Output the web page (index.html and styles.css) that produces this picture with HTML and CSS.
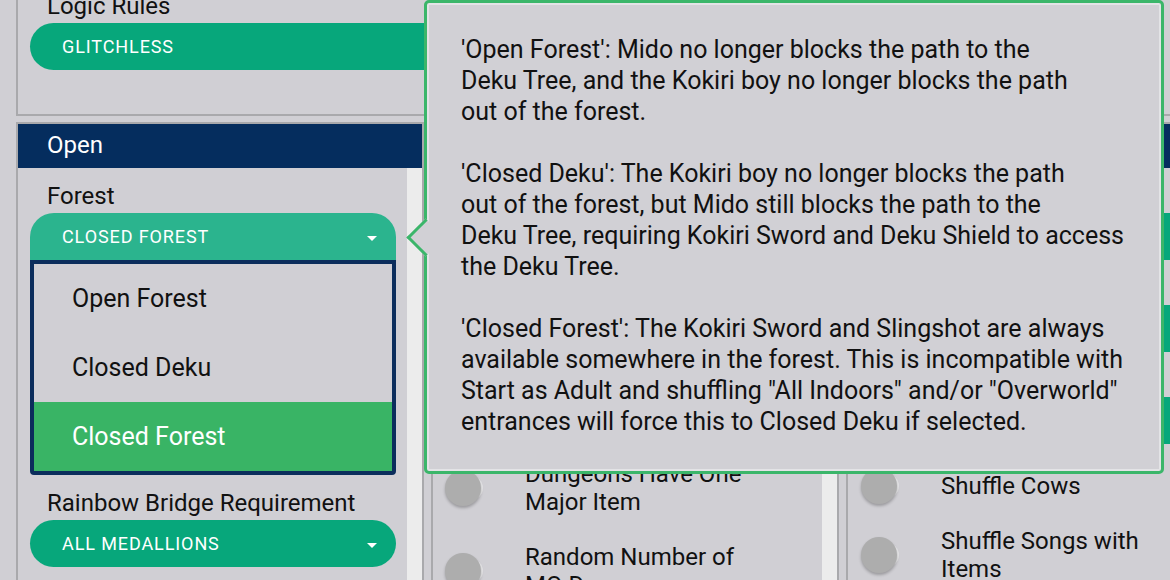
FILE: index.html
```html
<!DOCTYPE html>
<html lang="en">
<head>
<meta charset="utf-8">
<title>Settings</title>
<link rel="stylesheet" href="styles.css">
</head>
<body>
<div class="page">
  <div class="top-panel">
    <div class="field first wide">
      <div class="label">Logic Rules</div>
      <div class="select"><span>Glitchless</span><i class="caret"></i></div>
    </div>
  </div>

  <div class="columns">
    <section class="section">
      <h2 class="section-head">Open</h2>
      <div class="section-body">
        <div class="section-content">
          <div class="field first">
            <div class="label">Forest</div>
            <div class="select open"><span>Closed Forest</span><i class="caret"></i></div>
            <ul class="options">
              <li>Open Forest</li>
              <li>Closed Deku</li>
              <li class="selected">Closed Forest</li>
            </ul>
          </div>
          <div class="field">
            <div class="label">Rainbow Bridge Requirement</div>
            <div class="select"><span>All Medallions</span><i class="caret"></i></div>
          </div>
        </div>
        <div class="scrollbar"></div>
      </div>
    </section>

    <section class="section">
      <h2 class="section-head">World</h2>
      <div class="section-body">
        <div class="section-content toggles mid">
          <div class="toggle-row"><span class="switch"></span><span class="toggle-text">Randomize Main Rule<br>Settings</span></div>
          <div class="toggle-row"><span class="switch"></span><span class="toggle-text">Shuffle Dungeon<br>Entrances</span></div>
          <div class="toggle-row"><span class="switch"></span><span class="toggle-text">Start as Adult</span></div>
          <div class="toggle-row"><span class="switch"></span><span class="toggle-text">Bombchus in Logic</span></div>
          <div class="toggle-row"><span class="switch"></span><span class="toggle-text">Dungeons Have One<br>Major Item</span></div>
          <div class="toggle-row"><span class="switch"></span><span class="toggle-text">Random Number of<br>MQ Dungeons</span></div>
        </div>
        <div class="scrollbar"></div>
      </div>
    </section>

    <section class="section">
      <h2 class="section-head">Shuffle</h2>
      <div class="section-body">
        <div class="section-content">
          <div class="field first">
            <div class="label">Shopsanity</div>
            <div class="select"><span>Off</span><i class="caret"></i></div>
          </div>
          <div class="field">
            <div class="label">Tokensanity</div>
            <div class="select"><span>Off</span><i class="caret"></i></div>
          </div>
          <div class="field">
            <div class="label">Scrub Shuffle</div>
            <div class="select"><span>Off</span><i class="caret"></i></div>
          </div>
          <div class="toggles right">
            <div class="toggle-row"><span class="switch"></span><span class="toggle-text">Shuffle Cows</span></div>
            <div class="toggle-row"><span class="switch"></span><span class="toggle-text">Shuffle Songs with<br>Items</span></div>
          </div>
        </div>
        <div class="scrollbar"></div>
      </div>
    </section>
  </div>

  <div class="tooltip">
    <p>'Open Forest': Mido no longer blocks the path to the<br>Deku Tree, and the Kokiri boy no longer blocks the path<br>out of the forest.</p>
    <p>'Closed Deku': The Kokiri boy no longer blocks the path<br>out of the forest, but Mido still blocks the path to the<br>Deku Tree, requiring Kokiri Sword and Deku Shield to access<br>the Deku Tree.</p>
    <p>'Closed Forest': The Kokiri Sword and Slingshot are always<br>available somewhere in the forest. This is incompatible with<br>Start as Adult and shuffling "All Indoors" and/or "Overworld"<br>entrances will force this to Closed Deku if selected.</p>
  </div>
</div>
</body>
</html>
```

FILE: styles.css
```css
* { box-sizing: border-box; }

html, body {
  margin: 0;
  padding: 0;
  overflow: hidden;
}

body {
  background: #d0cfd4;
  color: #111;
  font-family: Roboto, "Liberation Sans", sans-serif;
}

.page {
  position: relative;
  width: 1170px;
  height: 580px;
  overflow: hidden;
}

.top-panel {
  width: 1238px;
  margin-left: 16px;
  margin-top: -21px;
  border: 2px solid #a9a9ac;
  border-top: none;
  padding: 14px 11px 44px 12px;
}

.field { margin-top: 15px; }
.field.first { margin-top: 0; }
.field.wide { width: 560px; }

.label {
  font-size: 24px;
  line-height: 26px;
  padding-left: 17px;
  margin-bottom: 4px;
  color: #111;
  white-space: nowrap;
}

.select {
  height: 47px;
  border-radius: 24px;
  background: #07a77b;
  color: #fff;
  display: flex;
  align-items: center;
  justify-content: space-between;
  padding: 0 19px 0 32px;
  font-size: 18px;
  letter-spacing: 0.9px;
  text-transform: uppercase;
}

.select.open {
  background: #2bb48e;
  border-radius: 24px 24px 0 0;
}

.caret {
  width: 0;
  height: 0;
  border-left: 5px solid transparent;
  border-right: 5px solid transparent;
  border-top: 5px solid #fff;
  margin-top: 3px;
}

.options {
  list-style: none;
  margin: 0;
  padding: 0;
  border: 4px solid #0b2d5c;
  border-radius: 0 0 4px 4px;
}

.options li {
  height: 69px;
  display: flex;
  align-items: center;
  padding-left: 38px;
  font-size: 25px;
  color: #111;
}

.options li.selected {
  background: #39b465;
  color: #fff;
}

.columns {
  display: flex;
  gap: 7px;
  padding-left: 16px;
  margin-top: 6px;
}

.section {
  flex: 0 0 408px;
  border: 2px solid #a9a9ac;
  height: 620px;
  display: flex;
  flex-direction: column;
}

.section-head {
  margin: 0;
  height: 44px;
  line-height: 42px;
  background: #052d5e;
  color: #fff;
  font-size: 24px;
  font-weight: 400;
  padding-left: 29px;
}

.section-body {
  flex: 1;
  display: flex;
}

.section-content {
  flex: 1;
  padding: 15px 11px 0 12px;
}

.scrollbar {
  width: 15px;
  background: #ececec;
}

.toggles.mid { padding-top: 16px; padding-left: 12px; }
.toggles.right { margin-top: 28px; padding-left: 1px; }

.toggle-row {
  display: flex;
  align-items: center;
  margin-top: 27px;
}
.toggle-row:first-child { margin-top: 0; }

.switch {
  position: relative;
  flex: none;
  width: 38px;
  height: 28px;
  margin-right: 42px;
}

.switch::before {
  content: "";
  position: absolute;
  left: 2px;
  top: 2px;
  width: 36px;
  height: 24px;
  border-radius: 12px;
  background: #e6e6e8;
}

.switch::after {
  content: "";
  position: absolute;
  left: 0;
  top: -4px;
  width: 36px;
  height: 36px;
  border-radius: 50%;
  background: #adadad;
  box-shadow: 0 2px 3px rgba(0, 0, 0, 0.25);
}

.toggle-text {
  font-size: 24px;
  line-height: 28px;
  white-space: nowrap;
}

.tooltip {
  position: absolute;
  left: 424px;
  top: 0;
  width: 740px;
  height: 474px;
  border: 3px solid #3bb66a;
  border-radius: 5px;
  background: #d1d0d5;
  box-shadow: inset 0 0 0 2px #e3e3e6;
  padding: 31px 0 0 34px;
  font-size: 25px;
  line-height: 31px;
  color: #111;
  white-space: nowrap;
}

.tooltip::before {
  content: "";
  position: absolute;
  left: -15px;
  top: 221px;
  width: 24px;
  height: 24px;
  background: #d1d0d5;
  border-left: 3px solid #3bb66a;
  border-bottom: 3px solid #3bb66a;
  transform: rotate(45deg);
}

.tooltip p {
  margin: 0 0 31px 0;
}
```
